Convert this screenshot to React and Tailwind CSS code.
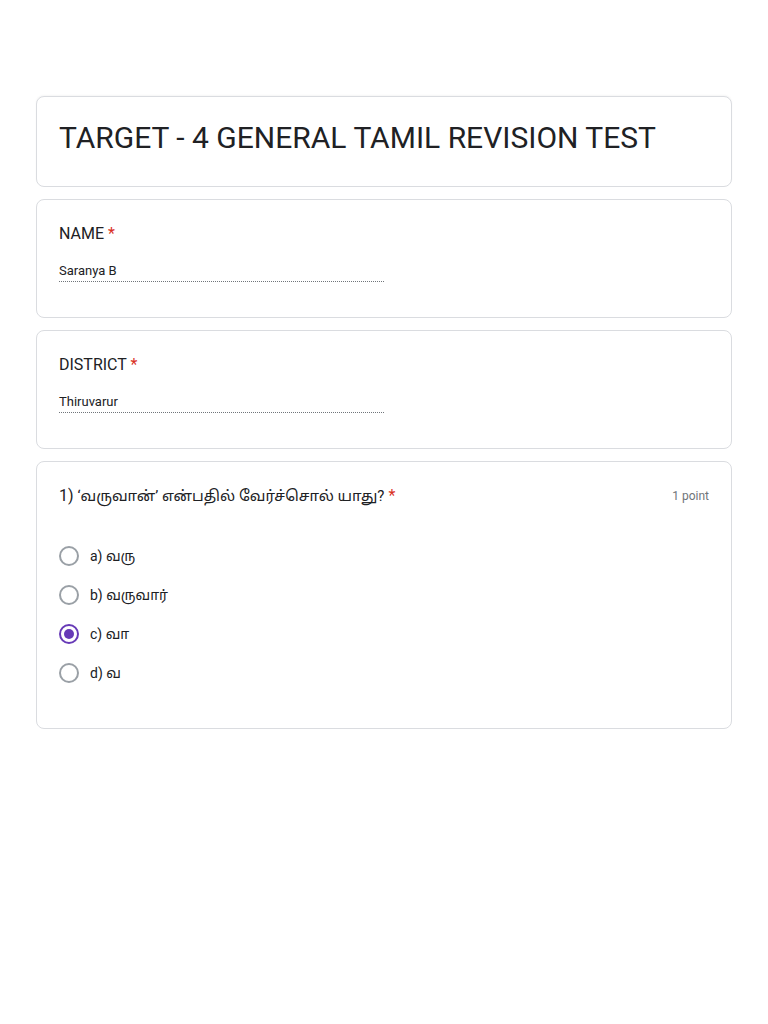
const font = { fontFamily: 'Roboto, "Noto Sans Tamil", "Noto Sans", "Liberation Sans", sans-serif' }

const options = [
  { label: 'a) வரு', checked: false },
  { label: 'b) வருவார்', checked: false },
  { label: 'c) வா', checked: true },
  { label: 'd) வ', checked: false },
]

function Radio({ checked }) {
  if (checked) {
    return (
      <span className="w-5 h-5 rounded-full border-2 border-[#673ab7] flex items-center justify-center">
        <span className="w-[10px] h-[10px] rounded-full bg-[#673ab7]"></span>
      </span>
    )
  }
  return <span className="w-5 h-5 rounded-full border-2 border-[#9aa0a6]"></span>
}

function TextQuestion({ title, answer }) {
  return (
    <div className="bg-white border border-[#dadce0] rounded-lg px-[22px] pt-[22px] pb-[35px]">
      <p className="text-base leading-6 text-[#202124]">
        {title} <span className="text-[#d93025]">*</span>
      </p>
      <div className="mt-[15px] w-[325px] border-b border-dotted border-[#70757a] text-[13px] leading-5 text-[#202124]">
        {answer}
      </div>
    </div>
  )
}

export default function App() {
  return (
    <div style={font} className="bg-white min-h-screen w-[768px] px-[36px] pt-[96px]">
      <div className="flex flex-col gap-[12px]">
        <div className="bg-white border border-[#dadce0] rounded-lg shadow-[0_-1px_2px_rgba(0,0,0,0.04)] px-[22px] pt-[21px] h-[91px]">
          <h1 className="text-[30px] leading-10 text-[#202124]">TARGET - 4 GENERAL TAMIL REVISION TEST</h1>
        </div>

        <TextQuestion title="NAME" answer="Saranya B" />
        <TextQuestion title="DISTRICT" answer="Thiruvarur" />

        <div className="bg-white border border-[#dadce0] rounded-lg px-[22px] pt-[22px] pb-[36px]">
          <div className="flex justify-between items-center">
            <p className="text-base leading-6 text-[#202124]">
              1) <span className="text-[15px]">‘வருவான்’ என்பதில் வேர்ச்சொல் யாது?</span> <span className="text-[#d93025]">*</span>
            </p>
            <span className="text-xs text-[#70757a]">1 point</span>
          </div>
          <div className="mt-[28px] flex flex-col">
            {options.map((o) => (
              <div key={o.label} className="h-[39px] flex items-center gap-[11px]">
                <Radio checked={o.checked} />
                <span className="text-sm text-[#202124]">{o.label}</span>
              </div>
            ))}
          </div>
        </div>
      </div>
    </div>
  )
}
